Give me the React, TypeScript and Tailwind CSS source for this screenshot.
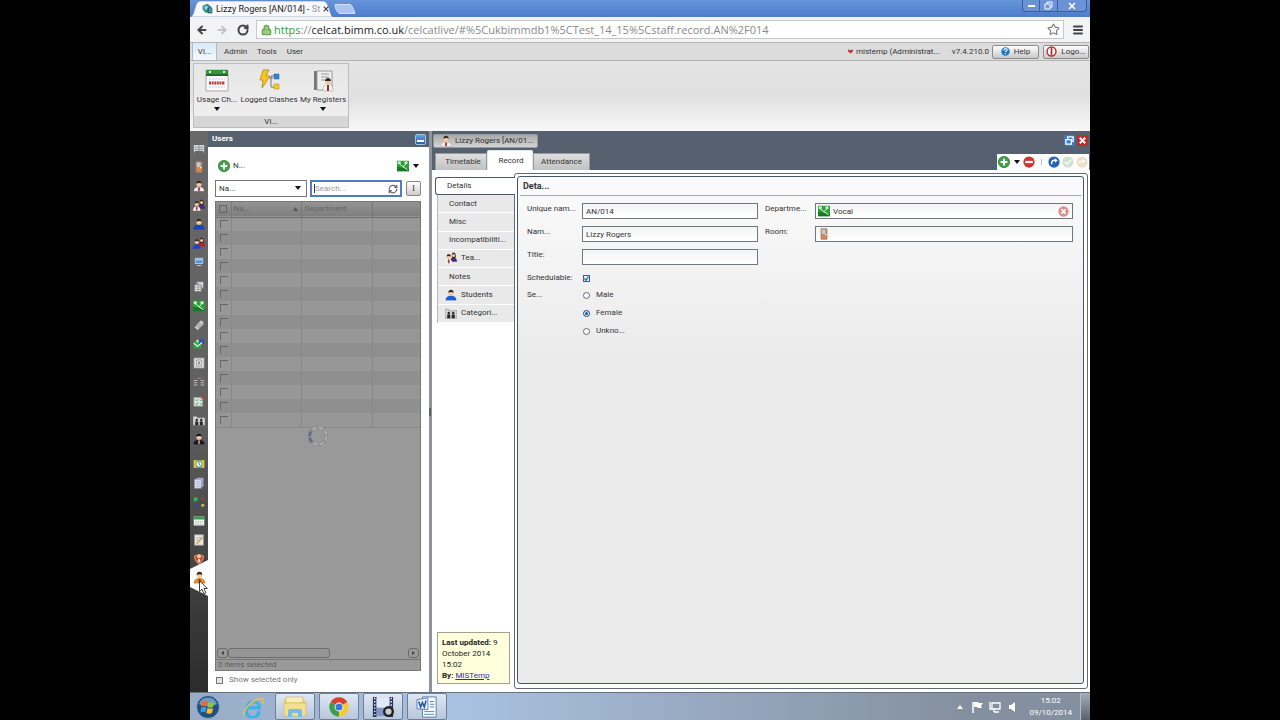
import React from 'react';
import { ArrowLeft, ArrowRight, RotateCw, RefreshCw, Star, Menu, Lock } from 'lucide-react';

type PersonProps = { body: string; hair?: string; tie?: string; className?: string };

const Person: React.FC<PersonProps> = ({ body, hair = '#3a2a1c', tie, className = 'w-3 h-3' }) => (
  <svg viewBox="0 0 16 16" className={className}>
    <path d="M1 15c0-4 3-6 7-6s7 2 7 6z" fill={body} stroke="#00000055" strokeWidth=".5" />
    <circle cx="8" cy="5.5" r="3.4" fill="#f3c9a5" />
    <path d="M4.5 5C4.5 2 6 1 8 1s3.5 1 3.5 4C10 3.5 7 3.5 4.5 5z" fill={hair} />
    {tie && <path d="M8 9.5L7 11.500 8 15l1-3.500z" fill={tie} stroke={tie} />}
  </svg>
);

type PeopleProps = { left: string; right: string; tie?: string; className?: string };

const People: React.FC<PeopleProps> = ({ left, right, tie, className = 'w-3 h-3' }) => (
  <svg viewBox="0 0 16 16" className={className}>
    <path d="M7 13c0-4 2-6 4.5-6S16 9 16 13z" fill={right} />
    <path d="M9 5c0-3 1-4.5 2.5-4.5S14.5 2 14.5 6l-1 2h-4z" fill="#40241a" />
    <circle cx="11.5" cy="4.5" r="2" fill="#f3c9a5" />
    <path d="M0 15.500c0-4 2-6 5-6s5 2 5 6z" fill={left} />
    <circle cx="5" cy="6.5" r="2.7" fill="#f3c9a5" />
    <path d="M2.300 6C2.300 3.500 3.500 3 5 3s2.700.5 2.700 3C6 5 4 5 2.300 6z" fill="#3a2a1c" />
    {tie && <path d="M5 10l-.8 2 .8 3 .8-3z" fill={tie} stroke={tie} />}
  </svg>
);

const DeptIcon = ({ className = 'w-3 h-3' }: { className?: string }) => (
  <svg viewBox="0 0 16 16" className={className}>
    <path d="M0 1h16v14H0z" fill="#2da23c" />
    <path d="M0 9l16 3v3H0z" fill="#117a22" />
    <path d="M1 2h4v3H1zM10 2h4v3h-4z" fill="#d9f7d4" />
    <path d="M2 4l6 5 5-5M8 9l6 4" fill="none" stroke="#e9ffe6" strokeWidth="1.3" />
  </svg>
);

const RoomIcon = ({ className = 'w-3 h-3' }: { className?: string }) => (
  <svg viewBox="0 0 16 16" className={className}>
    <path d="M4 1h8v14H4z" fill="#d9854c" stroke="#8d8178" />
    <path d="M5 2h5v6H5z" fill="#b8cbd6" />
    <circle cx="10.5" cy="9" r="1" fill="#fff" />
  </svg>
);

const CategoryIcon = ({ className = 'w-3 h-3' }: { className?: string }) => (
  <svg viewBox="0 0 16 16" className={className}>
    <path d="M0 3h5l1 2h10v10H0z" fill="#d5d5d5" stroke="#777" strokeWidth=".7" />
    <circle cx="5" cy="8" r="1.6" fill="#222" />
    <circle cx="11" cy="8" r="1.6" fill="#222" />
    <path d="M3 10h4v5H3zM9 10h4v5H9z" fill="#222" />
  </svg>
);

const Plus = ({ className = 'w-3 h-3' }: { className?: string }) => (
  <svg viewBox="0 0 16 16" className={className}>
    <circle cx="8" cy="8" r="7.5" fill="#43a047" stroke="#2b7a2f" />
    <path d="M8 3.500v9M3.500 8h9" stroke="#fff" strokeWidth="2.6" />
  </svg>
);

const Caret = () => (
  <svg viewBox="0 0 6 4" className="w-[6px] h-1 shrink-0"><path d="M0 0h6L3 4z" fill="#111" /></svg>
);

const Glyph = ({ children }: { children: React.ReactNode }) => (
  <svg viewBox="0 0 16 16" className="w-3 h-3">{children}</svg>
);

const railGroups: { name: string; icon: React.ReactNode }[][] = [
  [
    { name: 'Modules', icon: <Glyph><path d="M1 4h14v8H1z" fill="#d2d4da" /><path d="M2 7h12M2 10h12M8 4v8" stroke="#888b94" /><path d="M2 12v2M14 12v2" stroke="#ddd" /></Glyph> },
    { name: 'Rooms', icon: <RoomIcon /> },
    { name: 'Staff', icon: <Person body="#f4f1ee" tie="#b3262b" /> },
    { name: 'Teams', icon: <People left="#f4f1ee" right="#4a2a78" tie="#b3262b" /> },
    { name: 'Students', icon: <Person body="#1747c9" /> },
    { name: 'Groups', icon: <People left="#1747c9" right="#b3262b" /> },
    { name: 'Equipment', icon: <Glyph><path d="M3 3h10v7H3z" fill="#4b94e0" stroke="#cfe1f5" /><path d="M4 4h8v2H4z" fill="#9fcaf5" /><path d="M5 12h6v1H5z" fill="#dde" /></Glyph> },
  ],
  [
    { name: 'Courses', icon: <Glyph><path d="M5 1h9v9H5z" fill="#dcdce2" stroke="#777" /><path d="M2 5h9v9H2z" fill="#ececf0" stroke="#777" /><path d="M2 8h12M2 11h9M7 2v12" stroke="#888" /></Glyph> },
    { name: 'Departments', icon: <DeptIcon /> },
    { name: 'Tags', icon: <Glyph><path d="M2 11l8-9 4 1v4l-8 8z" fill="#d3d3d3" stroke="#777" /><path d="M5 11l5-6M7 12l5-6" stroke="#777" /></Glyph> },
    { name: 'Sites', icon: <Glyph><path d="M1 5h10v9H1z" fill="#31a544" /><path d="M8 2h7v6H8z" fill="#2c4fb8" /><path d="M1 7l5 4 6-5" stroke="#e2ffe0" strokeWidth="1.5" fill="none" /><circle cx="6" cy="4" r="2" fill="#a9e5a5" /></Glyph> },
    { name: 'Fixtures', icon: <Glyph><path d="M1 1h14v14H1z" fill="#dcdcdc" stroke="#777" /><path d="M5 4h6v8H5z" fill="#fff" stroke="#777" /><path d="M8 6v4" stroke="#666" strokeWidth="2" /></Glyph> },
    { name: 'Layouts', icon: <Glyph><path d="M1 6h5M1 9h5M1 12h5M10 6h5M10 9h5M10 12h5" stroke="#b8b8b8" strokeWidth="1.5" /><path d="M6 3h5" stroke="#b09a4c" /></Glyph> },
    { name: 'Registers', icon: <Glyph><path d="M1 3h12v12H1z" fill="#dbe9dd" stroke="#7f8d82" /><path d="M3 6l2 2 2-3M3 11l2 2 2-3M9 7h3M9 12h3" stroke="#3a8c62" fill="none" /><path d="M11 5l4-4" stroke="#d33" strokeWidth="2" /></Glyph> },
    { name: 'Categories', icon: <CategoryIcon /> },
    { name: 'Contacts', icon: <Person body="#11163f" hair="#16120f" tie="#d8a93a" /> },
  ],
  [
    { name: 'Periods', icon: <Glyph><path d="M1 3h14v10H1z" fill="#a5cc4c" /><path d="M1 3h3v10H1zM12 3h3v10h-3z" fill="#dfc33c" /><circle cx="8" cy="8" r="4" fill="#e8f6ff" stroke="#4b88a8" /><path d="M8 5v3l2 2" stroke="#286d3a" fill="none" /></Glyph> },
    { name: 'Notebooks', icon: <Glyph><path d="M5 1h9v12H5z" fill="#a3a8cd" /><path d="M2 3h9v12H2z" fill="#dcdff0" stroke="#8e93b8" /><path d="M4 6h5M4 9h5M4 12h5" stroke="#a0a4c3" /></Glyph> },
    { name: 'Clashes', icon: <Glyph><path d="M1 2h5v5H1z" fill="#28c04d" /><path d="M11 2h4v3h-4z" fill="#a64545" /><path d="M4 11h4v3H4z" fill="#3546c8" /><path d="M11 11h4v3h-4z" fill="#d8cf33" /></Glyph> },
    { name: 'Calendar', icon: <Glyph><path d="M1 2h14v12H1z" fill="#f1f3ee" /><path d="M1 2h14v4H1z" fill="#3c9b4c" /><path d="M3 9h10M3 12h10" stroke="#8a9a8c" strokeDasharray="2 1" /></Glyph> },
    { name: 'Notes', icon: <Glyph><path d="M2 1h12v14H2z" fill="#e6e6e6" stroke="#999" /><path d="M4 5h7M4 8h5" stroke="#aaa" /><path d="M5 13l8-9" stroke="#d1a832" strokeWidth="2" /></Glyph> },
    { name: 'Security', icon: <Glyph><path d="M2 4l6-2 6 2c0 5-2 8-6 11C4 12 2 9 2 4z" fill="#d2422d" stroke="#f1c27b" /><circle cx="8" cy="4.5" r="2.5" fill="#f3c9a5" /><path d="M7 8h2l1 3-2 2-2-2z" fill="#fff0d0" /></Glyph> },
  ],
];

const Cursor = () => (
  <svg viewBox="0 0 9 15" className="absolute left-[9px] top-3 z-10 w-[9px] h-[15px]">
    <path d="M.5.5v11L3 9.200l1.900 4.600 2-.9L5 8.500h3.300z" fill="#fff" stroke="#111" strokeWidth=".8" />
  </svg>
);

const sideTabs: { name: string; icon?: React.ReactNode }[] = [
  { name: 'Contact' },
  { name: 'Misc' },
  { name: 'Incompatibiliti...' },
  { name: 'Tea...', icon: <People left="#f4f1ee" right="#4a2a78" tie="#b3262b" /> },
  { name: 'Notes' },
  { name: 'Students', icon: <Person body="#1c5fe0" /> },
  { name: 'Categori...', icon: <CategoryIcon /> },
];

const BrowserChrome = () => (
  <div className="shrink-0">
    <div className="relative flex h-[17px] justify-between bg-linear-to-b from-[#6695dc] to-[#4d7cca]">
      <div className="relative flex w-[144px] items-center gap-[3px] pl-3 pr-2">
        <svg viewBox="0 0 144 17" preserveAspectRatio="none" className="absolute inset-0 w-full h-full">
          <path d="M0 17c4-1 4-7 6-12 1-3 2-4 5-4h121c4 0 5 2 7 7 2 6 2 9 5 9z" fill="#f7f8fa" stroke="#5577aa" strokeWidth=".5" />
        </svg>
        <svg viewBox="0 0 16 16" className="relative w-[11px] h-[11px] shrink-0">
          <path d="M1 4l7-3 6 5-2 7-7 1-4-5z" fill="#2a8b8b" />
          <circle cx="6" cy="7" r="3" fill="#8fd1cd" />
          <path d="M8 7h7v8H8z" fill="#1f5f77" />
          <path d="M10 9h4M10 12h4" stroke="#bfe" />
        </svg>
        <span className="relative flex-1 whitespace-nowrap text-[9px] leading-4 text-[#222]">Lizzy Rogers [AN/014] - <span className="text-[#999]">St</span></span>
        <button aria-label="Close tab" className="relative mr-[2px] flex">
          <svg viewBox="0 0 6 6" className="w-[6px] h-[6px]"><path d="M.7.7l4.600 4.600M5.300.7L.7 5.300" stroke="#444" strokeWidth="1.2" /></svg>
        </button>
      </div>
      <button aria-label="New tab" className="mr-auto flex pt-1">
        <svg viewBox="0 0 22 10" className="w-[22px] h-[10px]"><path d="M1 .5h15c2 0 4 6 5 9H6C3 9 1 4 1 .5z" fill="#a9c6f2" stroke="#d3e2f8" /></svg>
      </button>
      <div className="mr-[3px] flex h-3 overflow-hidden rounded-b border border-t-0 border-[#3a5f9e] bg-[#6a92d4]">
        <button aria-label="Minimize" className="flex w-[17px] items-center justify-center border-r border-[#3a5f9e]"><span className="h-[2px] w-[7px] bg-white" /></button>
        <button aria-label="Restore" className="flex w-[18px] items-center justify-center border-r border-[#3a5f9e]">
          <svg viewBox="0 0 9 9" className="w-[9px] h-[9px]" fill="none" stroke="#fff"><path d="M3 3V1h5v5H6" /><path d="M1 3h5v5H1z" /></svg>
        </button>
        <button aria-label="Close" className="flex w-[28px] items-center justify-center">
          <svg viewBox="0 0 8 8" className="w-2 h-2"><path d="M1 1l6 6M7 1L1 7" stroke="#fff" strokeWidth="1.6" /></svg>
        </button>
      </div>
    </div>
    <div className="flex h-[25px] items-center bg-[#f2f3f4] px-[6px]">
      <button aria-label="Back"><ArrowLeft className="w-3 h-3 text-[#444]" strokeWidth={4} /></button>
      <button aria-label="Forward" className="ml-2"><ArrowRight className="w-3 h-3 text-[#c4c4c4]" strokeWidth={4} /></button>
      <button aria-label="Reload" className="ml-[9px]"><RotateCw className="w-3 h-3 text-[#444]" strokeWidth={4} /></button>
      <div className="ml-[7px] flex h-[19px] flex-1 items-center border border-[#c6c8ca] bg-white pl-1 pr-[3px] text-[#8a8a8a]">
        <Lock className="w-[11px] h-3 shrink-0 fill-[#9ccc7c] text-[#6aa84f]" strokeWidth={3} />
        <span className="ml-[2px] flex-1 whitespace-nowrap font-['Open_Sans',sans-serif] text-[11px] leading-4"><span className="text-[#3a9a3f]">https</span>://<span className="text-[#222]">celcat.bimm.co.uk</span>/celcatlive/#%5Cukbimmdb1%5CTest_14_15%5Cstaff.record.AN%2F014</span>
        <Star className="w-[13px] h-[13px] text-[#777]" strokeWidth={2} />
      </div>
      <button aria-label="Menu" className="ml-2"><Menu className="w-3 h-3 text-[#444]" strokeWidth={4} /></button>
    </div>
  </div>
);

const Ribbon = () => (
  <div className="shrink-0">
    <nav className="flex h-[19px] items-center border-y border-[#b4b4b4] bg-[#dcdcdc]">
      <button className="ml-[2px] h-full w-[25px] border-x border-[#a9bccb] bg-linear-to-b from-[#d9e9f8] to-[#f4f8fc]">Vi...</button>
      <button className="ml-[7px]">Admin</button>
      <button className="ml-[10px]">Tools</button>
      <button className="ml-[10px]">User</button>
      <span className="ml-auto flex items-center gap-[3px]">
        <svg viewBox="0 0 6 5" className="w-[5px] h-[5px]"><path d="M3 5L0 2.500V1l1-1 2 1 2-1 1 1v1.500z" fill="#c93434" /></svg>
        mistemp (Administrat...
      </span>
      <span className="ml-3">v7.4.210.0</span>
      <button className="ml-[3px] flex h-[14px] w-[47px] items-center justify-center gap-1 rounded-[2px] border border-[#8b8b8b] bg-linear-to-b from-white to-[#c9c9c9]">
        <svg viewBox="0 0 16 16" className="w-[9px] h-[9px]"><circle cx="8" cy="8" r="7.5" fill="#1f78c8" /><path d="M5 6c0-4 6-4 6-1 0 2-3 2-3 4M8 11v2" stroke="#fff" strokeWidth="2" fill="none" /></svg>
        Help
      </button>
      <button className="ml-1 mr-px flex h-[14px] w-[46px] items-center justify-center gap-1 rounded-[2px] border border-[#8b8b8b] bg-linear-to-b from-white to-[#c9c9c9]">
        <svg viewBox="0 0 16 16" className="w-[11px] h-[11px]"><circle cx="8" cy="8" r="6.5" fill="#fff" stroke="#b5282c" strokeWidth="2" /><path d="M8 3v10" stroke="#b5282c" strokeWidth="2.5" /></svg>
        Logo...
      </button>
    </nav>
    <div className="flex h-[70px] bg-linear-to-b from-[#e4e4e4] via-[#e0e0e0] to-[#f8f8f8] px-[3px] pt-[2px]">
      <section className="flex h-[65px] w-[156px] flex-col border border-[#bdbdbd] bg-linear-to-b from-[#e6e6e6] to-[#f0f0f0]">
        <div className="flex flex-1 justify-between px-[2px] pt-1">
          <button className="flex w-[42px] flex-col items-center">
            <svg viewBox="0 0 24 24" className="w-6 h-6">
              <path d="M1 2h22v21H1z" fill="#fafafa" stroke="#aaa" />
              <path d="M1 2h22v6H1z" fill="#38973a" /><path d="M1 6h22v2H1z" fill="#1f6e24" />
              <path d="M4 4h2M18 4h2" stroke="#e5f5e2" strokeWidth="2" />
              <path d="M4 15h16" stroke="#b64146" strokeWidth="3" strokeDasharray="2 .6" />
              <path d="M4 11h16M4 19h16" stroke="#ccc" strokeDasharray="2 1" />
            </svg>
            <span className="mt-[2px] h-3 whitespace-nowrap leading-3">Usage Ch...</span>
            <span className="pt-px"><Caret /></span>
          </button>
          <button className="flex w-14 flex-col items-center">
            <svg viewBox="0 0 24 24" className="w-6 h-6">
              <path d="M12 10h4M14 8v11h3M14 8h3" stroke="#777" fill="none" />
              <path d="M6 2h6l-3 6h4L5 20l1-8H3z" fill="#f8c420" stroke="#b8860b" strokeWidth=".8" />
              <path d="M17 6h5v5h-5z" fill="#2e86d8" stroke="#1b5ca0" strokeWidth=".5" />
              <path d="M17 16h5v5h-5z" fill="#f5c631" stroke="#a88416" strokeWidth=".5" />
            </svg>
            <span className="mt-[2px] h-3 whitespace-nowrap leading-3">Logged Clashes</span>
          </button>
          <button className="flex w-[46px] flex-col items-center">
            <svg viewBox="0 0 24 24" className="w-6 h-6">
              <path d="M3 3h4v19H3z" fill="#777" /><path d="M6 3h15v19H6z" fill="#efefef" stroke="#999" />
              <path d="M10 6h8M10 9h8M10 12h4" stroke="#999" />
              <path d="M12 23c0-5 2-7 5-7s5 2 5 7z" fill="#f8f5f2" stroke="#999" strokeWidth=".5" />
              <circle cx="17" cy="13.5" r="2.6" fill="#f0c09a" /><path d="M14 13c0-4 6-4 6 0z" fill="#3a2a1c" />
              <path d="M17 17v6" stroke="#b3262b" strokeWidth="2" />
            </svg>
            <span className="mt-[2px] h-3 whitespace-nowrap leading-3">My Registers</span>
            <span className="pt-px"><Caret /></span>
          </button>
        </div>
        <h2 className="h-[11px] bg-[#d6d6d6] text-center leading-[11px]">Vi...</h2>
      </section>
    </div>
  </div>
);

const Rail = () => (
  <nav className="relative flex w-[18px] shrink-0 flex-col gap-[6px] bg-linear-to-b from-[#686868] via-[#606060] to-[#2c2c2c] pt-[7px]">
    {railGroups.map((group, g) => (
      <div key={g} className="flex flex-col">
        {group.map(item => (
          <button key={item.name} aria-label={item.name} className="flex h-[19px] items-center justify-center">{item.icon}</button>
        ))}
        {g === 2 && (
          <button aria-label="Users" className="relative flex h-[19px] items-center justify-center">
            <svg viewBox="0 0 18 36" className="absolute -top-2 left-0 w-[18px] h-9"><path d="M0 9L18 0v36L0 27z" fill="#fff" /></svg>
            <Person body="#e2912b" tie="#c23a1c" className="relative w-[13px] h-[13px]" />
            <Cursor />
          </button>
        )}
      </div>
    ))}
  </nav>
);

const UsersPane = () => (
  <section className="flex w-[221px] shrink-0 flex-col bg-white">
    <header className="flex h-4 shrink-0 items-center justify-between bg-[#56616f] pl-1 pr-[3px]">
      <h2 className="font-bold text-white">Users</h2>
      <button aria-label="Collapse" className="flex h-[11px] w-[11px] items-end justify-center rounded-[2px] border border-[#9fc0e6] bg-linear-to-b from-[#6aa0dc] to-[#2a5fae] pb-[2px]"><span className="h-[2px] w-[7px] bg-white" /></button>
    </header>
    <div className="flex min-h-0 flex-1 flex-col pl-[7px] pr-2">
      <div className="flex h-[33px] shrink-0 items-center justify-between pl-[3px] pr-[2px] pt-[5px]">
        <button className="flex items-center gap-[3px]"><Plus /> N...</button>
        <button aria-label="Department filter" className="flex items-center gap-1"><DeptIcon /><Caret /></button>
      </div>
      <div className="flex h-[17px] shrink-0 items-center">
        <div className="relative w-[92px]">
          <select aria-label="Filter by" className="block h-[17px] w-full appearance-none border border-[#777] bg-white pl-[3px]"><option>Na...</option></select>
          <span className="pointer-events-none absolute right-[6px] top-[6px] flex"><Caret /></span>
        </div>
        <div className="relative ml-[3px] flex-1">
          <input aria-label="Search" placeholder="Search..." className="block h-[17px] w-full border-2 border-[#4d7fc0] bg-white pl-[3px] placeholder:text-[#999]" />
          <span className="absolute left-[4px] top-1 h-[9px] w-px bg-[#333]" />
          <RefreshCw className="absolute right-[4px] top-1 h-[10px] w-[10px] text-[#666]" strokeWidth={3} />
        </div>
        <button className="ml-1 h-[15px] w-[15px] rounded-[2px] border border-[#888] bg-linear-to-b from-white to-[#ccc] font-['Liberation_Serif',serif] text-[#222]">I</button>
      </div>
      <div className="relative mt-1 flex min-h-0 flex-1 flex-col border border-[#777] bg-[#999]">
        <table className="w-full table-fixed border-collapse text-left text-[#666]">
          <colgroup><col className="w-[15px]" /><col className="w-[70px]" /><col className="w-[71px]" /><col /></colgroup>
          <thead>
            <tr className="h-[15px] border-b border-[#707070] bg-linear-to-b from-[#939393] to-[#7f7f7f]">
              <th className="border-r border-[#777] p-0"><input type="checkbox" aria-label="Select all" className="ml-[3px] block h-2 w-2 appearance-none border border-[#666]" /></th>
              <th className="border-r border-[#777] p-0 font-normal"><span className="flex items-center justify-between pl-[2px] pr-[3px]">Na...<svg viewBox="0 0 5 4" className="h-1 w-[5px]"><path d="M0 4h5L2.500 0z" fill="#555" /></svg></span></th>
              <th className="border-r border-[#777] p-0 pl-[3px] font-normal">Department</th>
              <th className="p-0" />
            </tr>
          </thead>
          <tbody>
            {Array.from({ length: 15 }, (_, i) => (
              <tr key={i} className="h-[14px] last:border-b last:border-[#888] odd:bg-[#979797] even:bg-[#8f8f8f]">
                <td className="border-r border-[#898989] p-0"><input type="checkbox" aria-label={`Select row ${i + 1}`} className="ml-1 block h-2 w-2 appearance-none border-l border-t border-[#666]" /></td>
                <td className="border-r border-[#898989] p-0" />
                <td className="border-r border-[#898989] p-0" />
                <td className="p-0" />
              </tr>
            ))}
          </tbody>
        </table>
        <div className="pointer-events-none absolute inset-0 flex items-center justify-center">
          <svg viewBox="0 0 22 22" className="h-[22px] w-[22px]">
            <circle cx="11" cy="11" r="8.5" fill="none" stroke="#8a8a8a" strokeWidth="3.6" />
            <circle cx="11" cy="11" r="8.5" fill="none" stroke="#a9a9a9" strokeWidth="2.4" strokeDasharray="5 1.700" />
            <circle cx="11" cy="11" r="8.5" fill="none" stroke="#66668f" strokeWidth="2.6" strokeDasharray="5 1.700 5 50" transform="rotate(135 11 11)" />
          </svg>
        </div>
        <div className="mt-auto flex h-3 shrink-0 items-center justify-between px-px">
          <button aria-label="Scroll left" className="flex h-[10px] w-[11px] items-center justify-center rounded-[3px] border border-[#6d6d6d]"><svg viewBox="0 0 3 4" className="h-1 w-[3px]"><path d="M3 0v4L0 2z" fill="#444" /></svg></button>
          <span className="mr-auto h-[10px] w-[102px] rounded-[3px] border border-[#6d6d6d] bg-[#959595]" />
          <button aria-label="Scroll right" className="flex h-[10px] w-[11px] items-center justify-center rounded-[3px] border border-[#6d6d6d]"><svg viewBox="0 0 3 4" className="h-1 w-[3px]"><path d="M0 0v4l3-2z" fill="#444" /></svg></button>
        </div>
        <div className="h-[11px] shrink-0 border-t border-[#777] pl-[2px] leading-[10px] text-[#5c5c5c]">0 items selected</div>
      </div>
      <label className="flex h-[21px] shrink-0 items-center gap-[6px] pb-[3px] pl-[1px] text-[#777]">
        <input type="checkbox" className="h-[7px] w-[7px] appearance-none border border-[#777] bg-[#e4e4e4]" />
        Show selected only
      </label>
    </div>
  </section>
);

const field = 'h-4 w-full border border-[#6f7680] bg-linear-to-b from-[#f4f4f5] to-white';
const radio = 'h-[7px] w-[7px] appearance-none rounded-full border border-[#667] bg-white checked:border-[#2d5f9a] checked:bg-[#1f4f8e] checked:shadow-[inset_0_0_0_1px_#fff]';

const DetailsForm = () => (
  <form className="flex-1 rounded-[3px] border border-[#46566a] bg-linear-to-b from-[#fbfbfc] to-[#ebebeb] to-35% px-[2px]">
    <h3 className="h-[19px] border-b border-[#a5a9ae] pl-[3px] text-[9px] font-bold leading-[19px]">Deta...</h3>
    <div className="flex gap-[7px] pl-[7px] pr-2 pt-[7px]">
      <div className="leading-3">
        <div className="grid grid-cols-[55px_176px] gap-y-[7px]">
          <label htmlFor="unique">Unique nam...</label>
          <input id="unique" defaultValue="AN/014" className={`${field} pl-[3px]`} />
          <label htmlFor="name">Nam...</label>
          <input id="name" defaultValue="Lizzy Rogers" className={`${field} pl-[3px]`} />
          <label htmlFor="title">Title:</label>
          <input id="title" className={`${field} pl-[3px]`} />
        </div>
        <div className="grid grid-cols-[55px_176px] gap-y-[5px] pt-[7px]">
          <label htmlFor="schedulable">Schedulable:</label>
          <span className="relative flex items-center pl-px">
            <input id="schedulable" type="checkbox" defaultChecked className="h-[7px] w-[7px] appearance-none border border-[#44617c] bg-[#dcebf7]" />
            <svg viewBox="0 0 7 7" className="pointer-events-none absolute left-px h-[7px] w-[7px]"><path d="M1.500 3.500L3 5.300 5.500 1.500" fill="none" stroke="#1f6aa8" strokeWidth="1.2" /></svg>
          </span>
          <span>Se...</span>
          <div className="flex flex-col gap-[6px]">
            <label className="flex items-center gap-[6px] pl-px"><input type="radio" name="sex" className={radio} />Male</label>
            <label className="flex items-center gap-[6px] pl-px"><input type="radio" name="sex" defaultChecked className={radio} />Female</label>
            <label className="flex items-center gap-[6px] pl-px"><input type="radio" name="sex" className={radio} />Unkno...</label>
          </div>
        </div>
      </div>
      <div className="grid flex-1 auto-rows-min grid-cols-[50px_1fr] gap-y-[7px] leading-3">
        <label htmlFor="department">Departme...</label>
        <div className="relative">
          <input id="department" defaultValue="Vocal" className={`${field} block pl-[17px]`} />
          <span className="pointer-events-none absolute left-[3px] top-[2px]"><DeptIcon /></span>
          <button type="button" aria-label="Clear department" className="absolute right-1 top-[3px]">
            <svg viewBox="0 0 16 16" className="h-[11px] w-[11px]"><circle cx="8" cy="8" r="7.5" fill="#dd8f8b" /><path d="M5 5l6 6M11 5l-6 6" stroke="#fff" strokeWidth="2.5" /></svg>
          </button>
        </div>
        <label htmlFor="room">Room:</label>
        <div className="relative">
          <input id="room" className={`${field} block pl-[17px]`} />
          <span className="pointer-events-none absolute left-[3px] top-[2px]"><RoomIcon /></span>
        </div>
      </div>
    </div>
  </form>
);

const topTab = 'h-[17px] border border-b-0 border-[#9a9a9a] bg-linear-to-b from-[#dedede] to-[#c2c2c2]';

const RecordPane = () => (
  <section className="flex min-w-0 flex-1 flex-col bg-white">
    <header className="flex h-[39px] shrink-0 flex-col bg-[#56616f]">
      <div className="flex h-[19px] items-center pl-px pr-[2px]">
        <button className="flex h-[14px] w-[105px] items-center gap-[3px] rounded-[2px] border border-[#9a9a9a] bg-linear-to-b from-[#a9a9a9] to-[#d4d4d4] pl-[6px]">
          <Person body="#f4f1ee" tie="#b3262b" /> Lizzy Rogers [AN/01...
        </button>
        <button aria-label="Restore pane" className="ml-auto">
          <svg viewBox="0 0 12 12" className="h-[11px] w-[11px]"><rect width="12" height="12" rx="2" fill="#3c7bc4" /><path d="M4 4V2h6v5H8M2 5h6v5H2z" fill="none" stroke="#fff" strokeWidth="1.4" /></svg>
        </button>
        <button aria-label="Close pane" className="ml-[2px]">
          <svg viewBox="0 0 12 12" className="h-[11px] w-[11px]"><rect width="12" height="12" rx="2" fill="#c02c2c" /><path d="M3 3l6 6M9 3l-6 6" stroke="#fff" strokeWidth="2" /></svg>
        </button>
      </div>
      <div className="flex flex-1 items-end pl-[3px]">
        <button className={`${topTab} w-[52px] pl-1`}>Timetable</button>
        <button className="h-5 w-[46px] rounded-t-[2px] border border-b-0 border-[#e5e9ee] bg-white pl-[2px]">Record</button>
        <button className={`${topTab} w-[57px]`}>Attendance</button>
        <div className="ml-auto mr-px flex h-4 w-[92px] items-center bg-white pl-px pr-px">
          <button aria-label="Add" className="flex items-center gap-1"><Plus /><Caret /></button>
          <button aria-label="Remove" className="ml-[3px]"><svg viewBox="0 0 16 16" className="h-3 w-3"><circle cx="8" cy="8" r="7.5" fill="#cf3535" /><path d="M3 8h10" stroke="#fff" strokeWidth="3" /></svg></button>
          <span className="ml-[6px] h-[6px] w-px bg-[#bbb]" />
          <button aria-label="Undo" className="ml-auto"><svg viewBox="0 0 16 16" className="h-3 w-3"><circle cx="8" cy="8" r="7.5" fill="#2463b8" /><path d="M5 11c-1-5 2-6 6-5" stroke="#fff" strokeWidth="2" fill="none" /><path d="M9 3l4 3-4 3z" fill="#fff" /></svg></button>
          <button aria-label="Save" className="ml-[2px]"><svg viewBox="0 0 16 16" className="h-3 w-3"><circle cx="8" cy="8" r="7.5" fill="#cfe3cc" /><path d="M4 8l3 3 5-6" stroke="#fff" strokeWidth="2" fill="none" /></svg></button>
          <button aria-label="Revert" className="ml-[2px]"><svg viewBox="0 0 16 16" className="h-3 w-3"><circle cx="8" cy="8" r="7.5" fill="#eee0c8" /><path d="M5 10V7h6M9 5l2 2-2 2" stroke="#fff" strokeWidth="1.5" fill="none" /></svg></button>
        </div>
      </div>
    </header>
    <div className="flex min-h-0 flex-1 pb-[3px] pl-[3px] pr-[2px] pt-[3px]">
      <div className="flex w-[79px] shrink-0 flex-col pt-1">
        <button className="z-10 -mr-px h-[18px] shrink-0 rounded-l-[3px] border border-r-0 border-[#4f5b6a] bg-white pl-[11px] text-left">Details</button>
        <div className="ml-[2px] grid h-32 shrink-0 auto-rows-fr border-l border-[#b5bac2]">
          {sideTabs.map(tab => (
            <button key={tab.name} className={`flex items-center gap-1 whitespace-nowrap border-b border-white bg-[#e9e9e9] ${tab.icon ? 'pl-[7px]' : 'pl-[11px]'}`}>{tab.icon}{tab.name}</button>
          ))}
        </div>
        <p className="mb-[5px] ml-[2px] mr-1 mt-auto border border-[#a2a292] bg-[#ffffdc] pb-[2px] pl-1 pt-1 leading-[11px] text-[#222]">
          <b>Last updated:</b> 9<br />October 2014<br />15:02<br /><b>By:</b> <a href="#mistemp" className="text-[#2b2bc0] underline">MISTemp</a>
        </p>
      </div>
      <div className="flex min-w-0 flex-1 rounded-[3px] border border-[#5f6b79] bg-white pb-1 pl-[2px] pr-[3px] pt-[2px]">
        <DetailsForm />
      </div>
    </div>
  </section>
);

const taskButton = 'flex w-10 items-center justify-center rounded-[2px] border border-[#6d7f96] bg-linear-to-b from-[#dfe7f2] to-[#b9c7db]';

const Taskbar = () => (
  <footer className="flex h-7 shrink-0 items-stretch border-t border-[#66727f] bg-linear-to-r from-[#98acc6] via-[#a9c1e0] via-30% to-[#84909f] to-86%">
    <button aria-label="Start" className="flex w-9 items-center justify-center">
      <svg viewBox="0 0 24 24" className="h-6 w-6">
        <circle cx="12" cy="12" r="11.5" fill="#23527f" stroke="#8fb0cf" />
        <path d="M3 9a9.500 9.500 0 0118 0c-6 3-12 3-18 0z" fill="#6f9cc4" />
        <path d="M6 7q3-2 5.500-.5l-1 5Q8 10 5 12z" fill="#ee6a33" /><path d="M12.500 7q3 1.500 5.500 0l-1 5q-3 1.500-5.500 0z" fill="#8cc63e" />
        <path d="M5 13q3-2 5.500-.5l-1 5Q7 16 4.500 17.500z" fill="#35a0e0" /><path d="M11.500 13q3 1.500 5.500 0l-1 5q-3 1.500-5.500 0z" fill="#fbc02d" />
      </svg>
    </button>
    <button aria-label="Internet Explorer" className="ml-2 flex w-[38px] items-center justify-center">
      <svg viewBox="0 0 24 24" className="h-[22px] w-[22px]">
        <path d="M18.500 16.500A7 7 0 115.500 13h13.500c0-9-13-9-13.500 0" fill="none" stroke="#3db3ea" strokeWidth="3.5" />
        <path d="M3 21C-1 17 12 2 22 3c2 1 1 3 0 5" fill="none" stroke="#f2c23c" strokeWidth="1.6" />
      </svg>
    </button>
    <button aria-label="Explorer" className={`${taskButton} ml-[3px]`}>
      <svg viewBox="0 0 24 22" className="h-[22px] w-6"><path d="M1 3h8l2 2h12v15H1z" fill="#e8cf75" /><path d="M3 1h17v6H3z" fill="#f8edb8" stroke="#c9ab4a" strokeWidth=".5" /><path d="M1 7h22v13H1z" fill="#f3df90" stroke="#c9ab4a" strokeWidth=".5" /><path d="M5 21v-6q0-2 2-2h10q2 0 2 2v6h-4v-4H9v4z" fill="#76bde4" /></svg>
    </button>
    <button aria-label="Chrome" className={`${taskButton} ml-[4px]`}>
      <svg viewBox="0 0 24 24" className="h-5 w-5">
        <path d="M12 12L2 6.200A11.500 11.500 0 0122 6.200z" fill="#d9402f" />
        <path d="M12 12l10-5.800A11.500 11.500 0 0112 23.500z" fill="#f6c92e" /><path d="M12 12v11.500A11.500 11.500 0 012 6.200z" fill="#3d9e4a" />
        <circle cx="12" cy="12" r="5.3" fill="#fff" /><circle cx="12" cy="12" r="4.2" fill="#3a78d8" />
      </svg>
    </button>
    <button aria-label="Video" className={`${taskButton} ml-[4px]`}>
      <svg viewBox="0 0 24 24" className="h-[22px] w-[22px]"><path d="M1 1h4v22H1zM19 1h4v22h-4z" fill="#26335c" /><path d="M5 2h14v10H5z" fill="#dfe9f8" /><path d="M5 13h14v9H5z" fill="#8297c0" /><path d="M3 2v20M21 2v20" stroke="#fff" strokeWidth="1.5" strokeDasharray="1.500 2" /><circle cx="18" cy="17" r="6" fill="#222" /><circle cx="18" cy="17" r="3.4" fill="#ccc" /></svg>
    </button>
    <button aria-label="Word" className={`${taskButton} ml-[4px]`}>
      <svg viewBox="0 0 24 24" className="h-[22px] w-[22px]"><path d="M7 1h15v22H7z" fill="#fafcff" stroke="#5577aa" /><path d="M15 6h5M15 9h5M15 12h5M9 17h11M9 20h11" stroke="#4f7fc0" /><path d="M1 4l12-2v13L1 14z" fill="#e4edf9" stroke="#3563ad" strokeWidth=".8" /><path d="M3 6l2 6 2-5 2 5 2-7" stroke="#234f9e" strokeWidth="1.6" fill="none" /></svg>
    </button>
    <div className="ml-auto flex items-center gap-[6px] text-white">
      <svg viewBox="0 0 6 4" className="mr-[2px] h-1 w-[6px]"><path d="M0 4h6L3 0z" fill="#fff" /></svg>
      <svg viewBox="0 0 12 12" className="h-3 w-3"><path d="M2 1v11" stroke="#fff" strokeWidth="1.5" /><path d="M3 1h4l1 1h4l-2 3 1 2H7L6 6H3z" fill="#fff" /></svg>
      <svg viewBox="0 0 12 12" className="h-3 w-3"><path d="M3 2h8v6H3zM5 11h5M1 1v7h4v3" fill="none" stroke="#fff" strokeWidth="1.3" /></svg>
      <svg viewBox="0 0 12 12" className="h-3 w-3"><path d="M2 4h2l4-3v10L4 8H2z" fill="#fff" /></svg>
      <time className="ml-1 text-center leading-3">15:02<br />09/10/2014</time>
      <button aria-label="Show desktop" className="ml-[2px] h-full w-[10px] border-l border-[#b2bcc8] bg-linear-to-b from-[#a5afbb] to-[#59636f]" />
    </div>
  </footer>
);

const App: React.FC = () => (
  <div className="flex h-screen justify-center bg-black px-[190px] font-['Roboto',sans-serif] text-[8px] text-[#333]">
    <div className="flex min-w-0 flex-1 flex-col overflow-hidden bg-white">
      <BrowserChrome />
      <Ribbon />
      <main className="flex min-h-0 flex-1">
        <Rail />
        <UsersPane />
        <div className="flex w-[3px] shrink-0 items-center bg-[#8f959c]"><span className="h-2 w-[2px] bg-[#55606e]" /></div>
        <RecordPane />
      </main>
      <Taskbar />
    </div>
  </div>
);

export default App;
